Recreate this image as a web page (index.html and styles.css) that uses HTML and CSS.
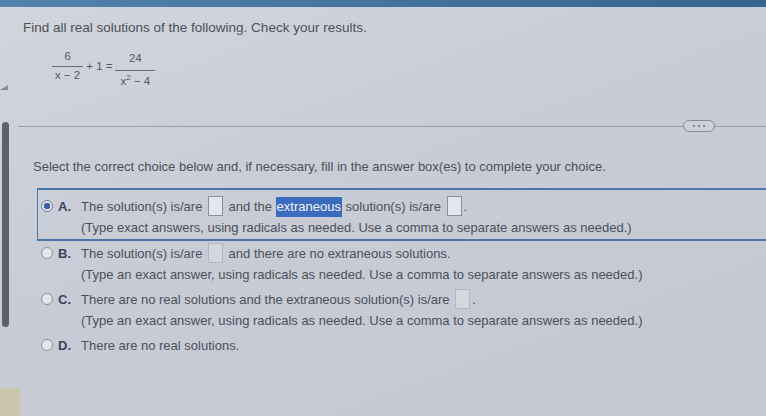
FILE: index.html
```html
<!DOCTYPE html>
<html>
<head>
<meta charset="utf-8">
<link rel="stylesheet" href="styles.css">
</head>
<body>
<div class="topbar"></div>
<div class="page">
  <div class="gutter">
    <div class="tri"></div>
    <div class="scroll"></div>
    <div class="beige"></div>
  </div>
  <div class="content">
    <p class="prompt">Find all real solutions of the following. Check your results.</p>
    <div class="equation">
      <span class="frac frac1"><span class="num">6</span><span class="den">x − 2</span></span>
      <span class="op">+ 1 =</span>
      <span class="frac frac2"><span class="num">24</span><span class="den">x<sup>2</sup> − 4</span></span>
    </div>
    <div class="divider"><span class="line"></span><span class="pill"><i></i><i></i><i></i></span><span class="line short"></span></div>
    <p class="instr">Select the correct choice below and, if necessary, fill in the answer box(es) to complete your choice.</p>
    <div class="choices">
      <div class="choice selected">
        <span class="radio on"></span><span class="letter">A.</span>
        <div class="body">
          <div class="l1">The solution(s) is/are <span class="box"></span> and the <span class="hl">extraneous</span> solution(s) is/are <span class="box"></span>.</div>
          <div class="l2">(Type exact answers, using radicals as needed. Use a comma to separate answers as needed.)</div>
        </div>
      </div>
      <div class="choice">
        <span class="radio"></span><span class="letter">B.</span>
        <div class="body">
          <div class="l1">The solution(s) is/are <span class="box dim"></span> and there are no extraneous solutions.</div>
          <div class="l2">(Type an exact answer, using radicals as needed. Use a comma to separate answers as needed.)</div>
        </div>
      </div>
      <div class="choice">
        <span class="radio"></span><span class="letter">C.</span>
        <div class="body">
          <div class="l1">There are no real solutions and the extraneous solution(s) is/are <span class="box dim"></span>.</div>
          <div class="l2">(Type an exact answer, using radicals as needed. Use a comma to separate answers as needed.)</div>
        </div>
      </div>
      <div class="choice">
        <span class="radio"></span><span class="letter">D.</span>
        <div class="body">
          <div class="l1">There are no real solutions.</div>
        </div>
      </div>
    </div>
  </div>
</div>
</body>
</html>
```
FILE: styles.css
```css
html, body {
  margin: 0;
  padding: 0;
  width: 766px;
  height: 416px;
  overflow: hidden;
}
body {
  background: linear-gradient(160deg, #d2d5dc 0%, #c8ccd6 45%, #c3c8d3 100%);
  font-family: "Liberation Sans", Arial, sans-serif;
  font-size: 13px;
  color: #4d5059;
}
.topbar {
  height: 7px;
  background: linear-gradient(90deg, #5383ad, #36648f);
}
.page {
  display: flex;
  height: 409px;
}
.gutter {
  width: 20px;
  flex: none;
  display: flex;
  flex-direction: column;
}
.tri {
  width: 0;
  height: 0;
  margin-top: 78px;
  border-left: 8px solid transparent;
  border-bottom: 5px solid #8a8c92;
}
.scroll {
  width: 7px;
  height: 205px;
  margin-top: 32px;
  margin-left: 2px;
  border-radius: 4px;
  background: #5d6169;
}
.beige {
  margin-top: auto;
  height: 28px;
  width: 20px;
  background: #cbc6ab;
}
.content {
  flex: 1;
  padding-left: 3px;
}
.prompt {
  margin: 13px 0 0 0;
  line-height: 16px;
  font-size: 13.5px;
}
.equation {
  display: flex;
  align-items: center;
  margin: 8px 0 0 29px;
  font-size: 11.5px;
  color: #555861;
}
.frac {
  display: inline-flex;
  flex-direction: column;
  align-items: center;
}
.frac .num {
  padding: 0 2px 3px;
  line-height: 13px;
}
.frac .den {
  border-top: 1px solid #6a6d75;
  padding: 2px 3px 0;
  line-height: 13px;
}
.frac2 { margin-top: 8px; }
.frac2 .num { padding-bottom: 5px; }
.frac2 .den { padding: 4px 5px 0; }
.den sup {
  font-size: 8px;
  vertical-align: 5px;
  line-height: 0;
}
.op {
  margin: 0 3px;
}
.divider {
  display: flex;
  align-items: center;
  margin: 32px 0 0 -5px;
}
.divider .line {
  flex: 1;
  height: 1px;
  background: #9a9ea6;
}
.divider .line.short {
  flex: none;
  width: 51px;
}
.pill {
  display: flex;
  gap: 3px;
  align-items: center;
  justify-content: center;
  width: 30px;
  height: 10px;
  border: 1px solid #8a8e96;
  border-radius: 6px;
  background: #cdd1da;
}
.pill i {
  width: 2px;
  height: 2px;
  background: #6a6e76;
  border-radius: 1px;
}
.instr {
  margin: 27px 0 0 10px;
  line-height: 16px;
}
.choices {
  margin-top: 13px;
  margin-left: 14px;
}
.choice {
  display: flex;
  align-items: flex-start;
  padding: 2px 0 2px 4px;
}
.choice.selected {
  border: solid #4b77a6;
  border-width: 2px 0 2px 1px;
  padding: 6px 0 1px 3px;
}
.radio {
  width: 10px;
  height: 10px;
  flex: none;
  margin-top: 4px;
  border: 1px solid #8c8f97;
  border-radius: 50%;
  background: #e4e6eb;
}
.radio.on {
  border-color: #6b7ea6;
  background: radial-gradient(circle, #3e5fa0 0, #3e5fa0 3px, #dfe3ec 3.5px);
}
.letter {
  width: 23px;
  flex: none;
  margin-left: 5px;
  font-weight: bold;
  color: #3c4160;
  line-height: 21px;
}
.body {
  line-height: 21px;
}
.l1, .l2 {
  white-space: nowrap;
}
.box {
  display: inline-block;
  width: 13px;
  height: 18px;
  vertical-align: -5px;
  border: 1px solid #8d9099;
  background: #e3e6ec;
  margin: 0 2px;
}
.box.dim {
  border-color: #b3b7c0;
  background: #d3d7df;
}
.hl {
  background: #3a6bbd;
  color: #f2f4fa;
  padding: 2px 1px 3px;
}
```
